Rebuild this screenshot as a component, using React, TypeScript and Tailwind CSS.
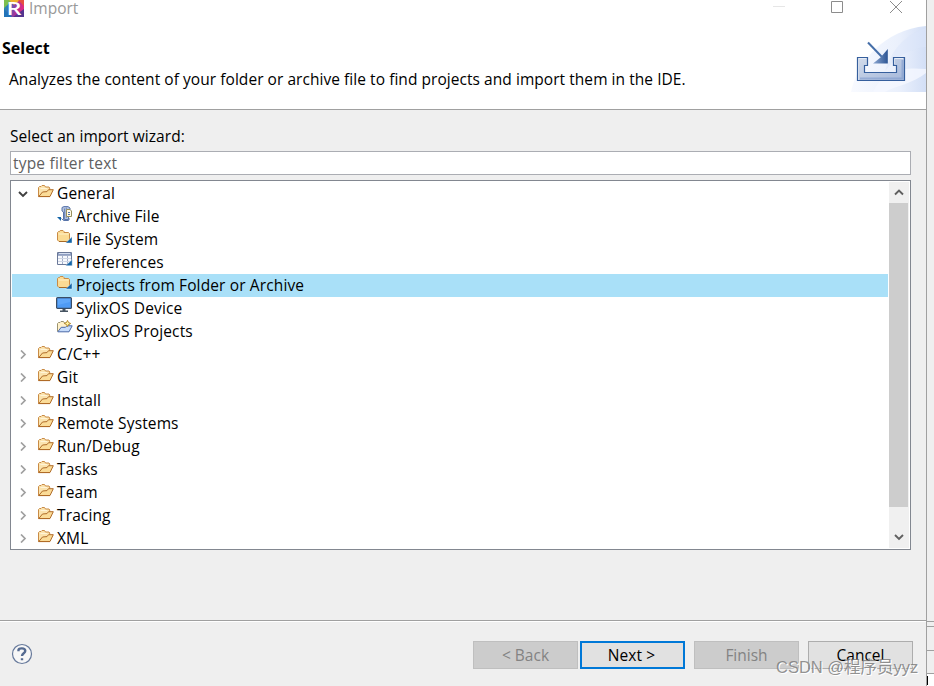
import clsx from "clsx";

const OpenFolderIcon = () => (
    <svg width="16" height="13" viewBox="0 0 16 13" fill="none">
        <path d="M0.5 11.5V2.5L1.5 1.5H3L4 0.5H6.5L7.5 2H11L11.7 3V4.5" fill="#fbe3ae" stroke="#c98b45" />
        <path d="M0.8 11.5L4.5 7L9 6.6L10.5 4.7H15.3L12 11.5H0.8Z" fill="#fbdc98" stroke="#b06c28" />
        <path d="M0.5 11.6H12" stroke="#b06c28" />
        <path d="M2.5 3.5H9" stroke="#fff4d8" />
    </svg>
);

const FolderIcon = () => (
    <svg width="16" height="14" viewBox="0 0 16 14" fill="none">
        <path d="M0.5 10V2.5L1.5 1.5H2.5L3.2 0.5H6L7 1.5V2.5H11.5L12.5 3.5V10.5L11.5 11.5H2L0.5 10Z" fill="#fbdb94" stroke="#c98b45" />
        <path d="M1.5 4H11.5" stroke="#fff1c8" />
        <path d="M2 11.5H12.5" stroke="#a96924" />
        <path d="M8.6 13L15 6.8V13H8.6Z" fill="#1465a8" stroke="#fff" strokeWidth="0.4" />
    </svg>
);

const ArchiveIcon = () => (
    <svg width="16" height="16" viewBox="0 0 16 16" fill="none">
        <path d="M5 1.5L7 0.6H11L13 2V5L11.5 6V13.5H6.5V6L5 5Z" fill="#b5c4df" stroke="#5874aa" />
        <path d="M7.5 2.5V14M9.3 1.5V12" stroke="#6f88bb" />
        <path d="M9.5 3.5H13L14.5 5V10.5H9.5Z" fill="#fff9e6" stroke="#98905f" />
        <path d="M11 6.5H13M11 8.5H13" stroke="#5475ac" />
        <path d="M4.5 12.5L6.5 14.5H11.5L12.5 12.5" stroke="#5874aa" />
        <path d="M0 11H4V15Z" fill="#1465a8" />
    </svg>
);

const PreferencesIcon = () => (
    <svg width="16" height="14" viewBox="0 0 16 14" fill="none">
        <path d="M0.5 0.5H14.5V12.5H0.5Z" fill="#f7f9fd" stroke="#6a7898" />
        <path d="M1 1H14V3H1Z" fill="#8f9fc2" />
        <path d="M2 1.5H13" stroke="#d5def0" />
        <path d="M1 3.5H14M5.5 4V12M10.5 4V12" stroke="#a3afca" />
        <path d="M1 6.5H14M1 9.5H14" stroke="#cfd6e5" />
        <path d="M8.6 13.7L15.2 7.4V13.7H8.6Z" fill="#1465a8" stroke="#fff" strokeWidth="0.4" />
    </svg>
);

const DeviceIcon = () => (
    <svg width="16" height="16" viewBox="0 0 16 16" fill="none">
        <path d="M6.5 11H9.5V13.5H12V15H4V13.5H6.5Z" fill="#465462" />
        <rect x="0.6" y="0.6" width="14.8" height="10.8" rx="1" fill="#4f9bf5" stroke="#394d66" strokeWidth="1.2" />
        <path d="M2 2H14V5L2 8Z" fill="#5fa7fa" />
    </svg>
);

const ProjectsIcon = () => (
    <svg width="16" height="13" viewBox="0 0 16 13" fill="none">
        <path d="M0.5 11.5V3.5L1.5 2.5H3L4 1.5H6.5L7.5 3H11L12 4V6" fill="#fff1cb" stroke="#9b936f" />
        <path d="M0.8 11.8L4.2 7.3H8.5L10 5.8H15.2L12 11.8Z" fill="#c6dcfb" stroke="#4c6aa8" />
        <path d="M10.5 0.4L11.5 2.5L13.7 3.5L11.5 4.5L10.5 6.6L9.5 4.5L7.3 3.5L9.5 2.5Z" fill="#fff3a2" stroke="#b18223" strokeWidth="0.9" />
    </svg>
);

const AppLogo = () => (
    <svg width="20" height="17" viewBox="0 0 20 17" className="ml-1 shrink-0">
        <defs>
            <linearGradient id="logo" x1="0" y1="0" x2="1" y2="0.2">
                <stop offset="0" stopColor="#2aa39a" />
                <stop offset="0.35" stopColor="#3a6cc0" />
                <stop offset="0.7" stopColor="#b02f96" />
                <stop offset="1" stopColor="#e02a80" />
            </linearGradient>
        </defs>
        <rect width="20" height="17" fill="url(#logo)" />
        <path d="M0 0H9L0 8Z" fill="#7cc04f" />
        <path d="M5 0H16L10 5Z" fill="#efb02f" />
        <path d="M14 0H20V6Z" fill="#e6503f" />
        <path d="M0 9L8 17H0Z" fill="#2273b8" />
        <path d="M9 17L20 9V17Z" fill="#54348f" />
        <text x="2.6" y="15" fill="#fff" fontFamily="Open Sans" fontSize="18" fontWeight="600" textLength="15" lengthAdjust="spacingAndGlyphs">R</text>
    </svg>
);

const ImportBanner = () => (
    <svg width="75" height="66" viewBox="0 0 75 66" fill="none" className="block">
        <defs>
            <linearGradient id="sky" x1="0" y1="0" x2="1" y2="0">
                <stop offset="0" stopColor="#f8faff" />
                <stop offset="0.65" stopColor="#eaf0fc" />
                <stop offset="1" stopColor="#d3dff6" />
            </linearGradient>
            <linearGradient id="tray" x1="0" y1="0" x2="1" y2="1">
                <stop offset="0" stopColor="#d3dceb" />
                <stop offset="1" stopColor="#a4b7da" />
            </linearGradient>
            <linearGradient id="head" x1="0" y1="0" x2="1" y2="0">
                <stop offset="0" stopColor="#8fa9d2" />
                <stop offset="1" stopColor="#2c5594" />
            </linearGradient>
        </defs>
        <path d="M0 66C6 36 33 4 75 0V66Z" fill="url(#sky)" />
        <path d="M75 2C56 8 42 21 34 45C45 31 57 23 75 21Z" fill="#dce6fa" opacity="0.5" />
        <path d="M75 43C51 41 33 44 22 66H34C44 60 61 58 75 47Z" fill="#f5f8ff" opacity="0.8" />
        <path d="M6.5 31.5H16.5V39.5H13.5V46.5H45.5V39.5H42.5V31.5H53.5V54.5H6.5Z" fill="url(#tray)" />
        <path d="M7.5 54V32.5H15.5M43.5 38V32.5H52" stroke="#e6ecf6" />
        <path d="M9 52.5H51.5V34" stroke="#839dcc" strokeWidth="2" opacity="0.65" />
        <path d="M6.5 31.5H16.5V39.5H13.5V46.5H45.5V39.5H42.5V31.5H53.5V54.5H6.5Z" stroke="#365f9d" strokeWidth="1.2" />
        <path d="M17 16.5L31 31" stroke="#466fa9" strokeWidth="2" />
        <path d="M36.8 23V37.5H22L29.5 31.5Z" fill="url(#head)" />
    </svg>
);

const ArrowGlyph = ({ dir, color = "#606060" }: { dir: "up" | "down" | "right"; color?: string }) => {
    const paths = {
        up: "M1 6.5L5 2.5L9 6.5",
        down: "M1 2L5 6L9 2",
        right: "M3 0.5L7 4.5L3 8.5",
    };
    return (
        <svg width="10" height="9" viewBox="0 0 10 9" fill="none">
            <path d={paths[dir]} stroke={color} strokeWidth={dir === "right" ? 1.7 : 1.9} />
        </svg>
    );
};

const wizards = [
    { label: "Archive File", icon: <ArchiveIcon />, pad: "pt-px" },
    { label: "File System", icon: <FolderIcon />, pad: "pt-0.5" },
    { label: "Preferences", icon: <PreferencesIcon />, pad: "pt-px" },
    { label: "Projects from Folder or Archive", icon: <FolderIcon />, pad: "pt-0.5", selected: true },
    { label: "SylixOS Device", icon: <DeviceIcon />, pad: "pt-0 -ml-px mr-px" },
    { label: "SylixOS Projects", icon: <ProjectsIcon />, pad: "pt-0" },
];

const groups = ["C/C++", "Git", "Install", "Remote Systems", "Run/Debug", "Tasks", "Team", "Tracing", "XML"];

const GroupRow = ({ label, open }: { label: string; open?: boolean }) => (
    <div className="flex h-[23px]">
        <div className={clsx("w-[26px] shrink-0 pl-1.5", open ? "pt-2" : "pt-[7px]")}>
            <ArrowGlyph dir={open ? "down" : "right"} color={open ? "#404040" : "#a0a0a0"} />
        </div>
        <div className="w-[19px] shrink-0 pt-[3px]">
            <OpenFolderIcon />
        </div>
        <span className="leading-[23px]">{label}</span>
    </div>
);

const buttonClass = "flex h-7 w-[105px] items-center justify-center border leading-6";

const App = () => {
    return (
        <div className="relative flex h-[686px] w-[934px] overflow-hidden bg-[#efefef] font-['Open_Sans','Noto_Sans',sans-serif] text-[15.5px] whitespace-nowrap text-black">
            <div className="flex w-[926px] shrink-0 flex-col">
                {/* Title bar and banner */}
                <div className="h-[110px] shrink-0 border-b border-[#a0a0a0] bg-white">
                    <div className="flex h-[26px] items-start">
                        <AppLogo />
                        <span className="ml-[5px] leading-4 text-[#999]">Import</span>
                        <div className="ml-auto flex">
                            <svg width="12" height="14" className="mr-[46px]"><path d="M0 6.5H12" stroke="#e6e6e6" /></svg>
                            <svg width="12" height="14" className="mr-[47px]"><path d="M0.5 1.5H11.5V12.5H0.5Z" fill="none" stroke="#8c8c8c" /></svg>
                            <svg width="12" height="14" className="mr-6"><path d="M0 1L12 13M12 1L0 13" stroke="#8c8c8c" /></svg>
                        </div>
                    </div>
                    <div className="flex justify-between">
                        <div className="pt-[11px]">
                            <h1 className="pl-0.5 text-[16px] leading-[22px] font-bold">Select</h1>
                            <p className="pt-[9px] pl-[9px] leading-[22px] tracking-[0.05px]">
                                Analyzes the content of your folder or archive file to find projects and import them in the IDE.
                            </p>
                        </div>
                        <ImportBanner />
                    </div>
                </div>

                {/* Wizard list */}
                <div className="h-[511px] shrink-0 border-b border-[#a0a0a0] px-[10px] pt-[15px]">
                    <label className="block h-[26px] leading-[22px] tracking-[0.05px]">Select an import wizard:</label>
                    <div className="h-6 w-[901px] border border-[#abadb3] bg-white pl-0.5 leading-[22px] tracking-[0.2px] text-[#606060]">
                        type filter text
                    </div>
                    <div className="mt-[5px] flex h-[370px] w-[901px] overflow-hidden border border-[#828790] bg-white p-px">
                        <div className="w-[876px] shrink-0 tracking-[0.13px]">
                            <GroupRow label="General" open />
                            {wizards.map((wizard) => (
                                <div key={wizard.label} className={clsx("flex h-[23px] pl-[45px]", wizard.selected && "bg-[#a9e0f8]")}>
                                    <div className={clsx("w-[19px] shrink-0", wizard.pad)}>{wizard.icon}</div>
                                    <span className="leading-[23px]">{wizard.label}</span>
                                </div>
                            ))}
                            {groups.map((group) => (
                                <GroupRow key={group} label={group} />
                            ))}
                        </div>
                        <div className="ml-px flex w-5 flex-col bg-[#f0f0f0]">
                            <div className="flex h-[21px] items-center justify-center"><ArrowGlyph dir="up" /></div>
                            <div className="h-[304px] w-[19px] bg-[#cdcdcd]" />
                            <div className="flex flex-1 justify-center pt-[26px]"><ArrowGlyph dir="down" /></div>
                        </div>
                    </div>
                </div>

                {/* Button bar */}
                <div className="flex h-[65px] border-t border-white pt-[19px] pr-[13px]">
                    <svg width="22" height="22" viewBox="0 0 22 22" className="mt-0.5 ml-[11px]">
                        <circle cx="11" cy="11" r="9.5" fill="#f7f7f7" stroke="#66799b" strokeWidth="1.2" />
                        <path d="M7.5 8.2V6.8C8 5 14 4.6 14.3 7.8C14.4 10.3 11 10.3 11 13M11 15.2V17.2" fill="none" stroke="#556b91" strokeWidth="2.4" />
                    </svg>
                    <div className="ml-auto flex">
                        <button className={clsx(buttonClass, "border-[#bfbfbf] bg-[#ccc] text-[#838383]")}>&lt; Back</button>
                        <button className={clsx(buttonClass, "ml-0.5 border-2 border-[#0078d7] bg-[#e1e1e1] pr-0.5 tracking-[0.13px]")}>Next &gt;</button>
                        <button className={clsx(buttonClass, "ml-[9px] border-[#bfbfbf] bg-[#ccc] text-[#838383]")}>Finish</button>
                        <button className={clsx(buttonClass, "ml-[9px] border-[#adadad] bg-[#e1e1e1]")}>Cancel</button>
                    </div>
                </div>
            </div>

            {/* Edge of the window behind */}
            <div className="flex w-2 shrink-0 flex-col border-l border-[#a0a0a0]">
                <div className="h-[622px] border-b border-[#a0a0a0]" />
                <div className="h-[5px] border-b border-[#a0a0a0]" />
                <div className="h-6 border-b border-[#a0a0a0]" />
                <div className="h-[23px] border-b border-[#a0a0a0]" />
                <div className="flex-1 bg-white pt-0.5"><div className="h-[9px] w-px bg-black" /></div>
            </div>

            <span className="absolute top-[656px] left-[776px] font-['Liberation_Sans','Noto_Sans_CJK_SC',sans-serif] text-[16.5px] leading-[22px] text-[#777]/80 [text-shadow:1px_1px_0_#fff]">
                CSDN @程序员yyz
            </span>
        </div>
    );
};

export default App;
